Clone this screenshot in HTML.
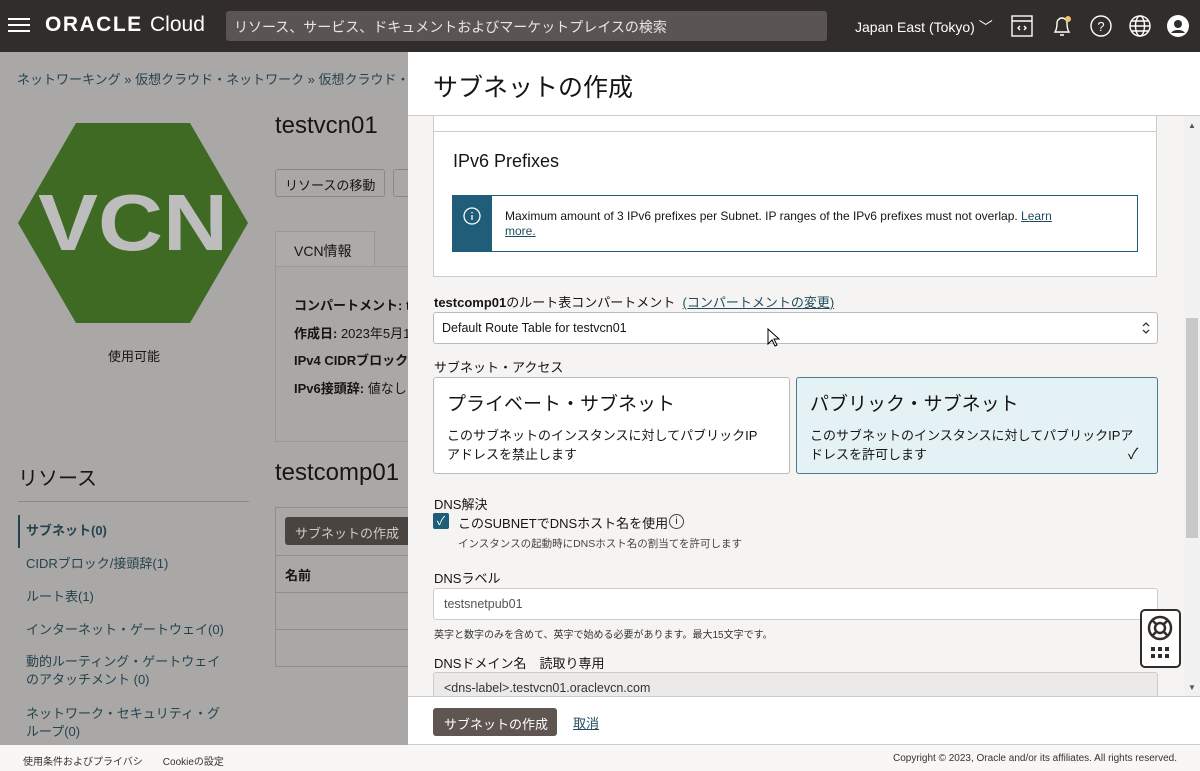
<!DOCTYPE html>
<html><head><meta charset="utf-8"><style>
*{margin:0;padding:0;box-sizing:border-box}
body{width:1200px;height:771px;overflow:hidden;position:relative;background:#a9a8a6;font-family:"Liberation Sans","Noto Sans CJK JP",sans-serif;color:#161513}
.a{position:absolute;white-space:nowrap}
.hdr{position:absolute;left:0;top:0;width:1200px;height:52px;background:#312d2a}
.lnk{color:#1d4d5e}
</style></head><body>
<div class="hdr">
 <div class="a" style="left:8px;top:18px;width:22px;height:2px;background:#fff;box-shadow:0 6px 0 #fff,0 12px 0 #fff"></div>
 <div class="a" style="left:45px;top:13px;color:#fff;font-size:21px;font-weight:bold;letter-spacing:1.5px">ORACLE <span style="font-weight:normal;letter-spacing:0">Cloud</span></div>
 <div class="a" style="left:226px;top:11px;width:601px;height:30px;background:#5a5552;border-radius:3px;color:#e8e6e4;font-size:14px;padding:6px 8px">リソース、サービス、ドキュメントおよびマーケットプレイスの検索</div>
 <div class="a" style="left:855px;top:17px;color:#fff;font-size:14px">Japan East (Tokyo) ﹀</div>
 <svg class="a" style="left:1010px;top:14px" width="24" height="24" viewBox="0 0 24 24" fill="none" stroke="#fff" stroke-width="1.4"><rect x="2" y="2" width="20" height="20"/><line x1="2" y1="7" x2="22" y2="7"/><path d="M10 12l-2 2 2 2M14 12l2 2-2 2"/></svg>
 <svg class="a" style="left:1050px;top:13px" width="24" height="26" viewBox="0 0 24 26" fill="none" stroke="#fff" stroke-width="1.4"><path d="M5 19c2-3 2-6 2-9a5 5 0 0 1 10 0c0 3 0 6 2 9z M10 22h4"/><circle cx="18" cy="6" r="3" fill="#f1c26b" stroke="none"/></svg>
 <svg class="a" style="left:1089px;top:14px" width="24" height="24" viewBox="0 0 24 24" fill="none" stroke="#fff" stroke-width="1.4"><circle cx="12" cy="12" r="10"/><text x="12" y="17" text-anchor="middle" fill="#fff" stroke="none" font-size="13" font-family="Liberation Sans">?</text></svg>
 <svg class="a" style="left:1128px;top:14px" width="24" height="24" viewBox="0 0 24 24" fill="none" stroke="#fff" stroke-width="1.4"><circle cx="12" cy="12" r="10"/><ellipse cx="12" cy="12" rx="4.5" ry="10"/><path d="M2 12h20M4 7h16M4 17h16"/></svg>
 <svg class="a" style="left:1166px;top:14px" width="24" height="24" viewBox="0 0 24 24"><circle cx="12" cy="12" r="11" fill="#fff"/><circle cx="12" cy="10" r="4" fill="#312d2a"/><path d="M5 19a8 6 0 0 1 14 0" fill="#312d2a"/></svg>
</div>
<div class="a" style="left:17px;top:69px;font-size:13px;color:#27424f">ネットワーキング » 仮想クラウド・ネットワーク » 仮想クラウド・</div>
<svg class="a" style="left:18px;top:123px" width="230" height="200" viewBox="0 0 230 200"><polygon points="58,0 172,0 230,100 172,200 58,200 0,100" fill="#3f6a24"/><text x="115" y="127" text-anchor="middle" fill="#bdbdbd" font-size="80" font-weight="bold" font-family="Liberation Sans" textLength="190" lengthAdjust="spacingAndGlyphs">VCN</text></svg>
<div class="a" style="left:108px;top:346px;font-size:13px">使用可能</div>
<div class="a" style="left:275px;top:112px;font-size:24px">testvcn01</div>
<div class="a" style="left:275px;top:169px;width:110px;height:28px;border:1px solid #888;border-radius:3px;font-size:13px;padding:5px 9px">リソースの移動</div>
<div class="a" style="left:393px;top:169px;width:20px;height:28px;border:1px solid #888;border-right:none;border-radius:3px 0 0 3px"></div>
<div class="a" style="left:275px;top:231px;width:100px;height:36px;border:1px solid #999;border-bottom:none;background:#acabaa;font-size:14px;padding:9px 18px">VCN情報</div>
<div class="a" style="left:275px;top:266px;width:133px;height:1px;background:#999"></div>
<div class="a" style="left:275px;top:266px;width:133px;height:176px;border-left:1px solid #999;border-bottom:1px solid #999"></div>
<div class="a" style="left:294px;top:292px;font-size:13px;line-height:27.5px"><b>コンパートメント:</b> t<br><b>作成日:</b> 2023年5月1<br><b>IPv4 CIDRブロック</b><br><b>IPv6接頭辞:</b> 値なし</div>
<div class="a" style="left:18px;top:462px;font-size:20px">リソース</div>
<div class="a" style="left:18px;top:501px;width:231px;height:1px;background:#8a8988"></div>
<div class="a" style="left:18px;top:515px;width:2px;height:33px;background:#27424f"></div>
<div class="a" style="left:26px;top:514px;font-size:13px;line-height:33px;color:#27424f"><b>サブネット(0)</b><br>CIDRブロック/接頭辞(1)<br>ルート表(1)<br>インターネット・ゲートウェイ(0)</div>
<div class="a" style="left:26px;top:653px;font-size:13px;line-height:18px;color:#27424f">動的ルーティング・ゲートウェイ<br>のアタッチメント (0)</div>
<div class="a" style="left:26px;top:705px;font-size:13px;line-height:18px;color:#27424f">ネットワーク・セキュリティ・グ<br>ループ(0)</div>
<div class="a" style="left:275px;top:459px;font-size:24px">testcomp01</div>
<div class="a" style="left:275px;top:507px;width:133px;height:160px;border:1px solid #8f8e8d;border-right:none"></div>
<div class="a" style="left:285px;top:517px;width:123px;height:28px;background:#4a4441;color:#ccc;font-size:13px;padding:6px 10px;border-radius:3px 0 0 3px">サブネットの作成</div>
<div class="a" style="left:275px;top:555px;width:133px;height:1px;background:#8f8e8d"></div>
<div class="a" style="left:285px;top:565px;font-size:13px;font-weight:bold">名前</div>
<div class="a" style="left:275px;top:592px;width:133px;height:1px;background:#8f8e8d"></div>
<div class="a" style="left:275px;top:629px;width:133px;height:1px;background:#8f8e8d"></div>
<div class="a" style="left:0;top:745px;width:1200px;height:26px;background:#f8f7f5"></div>
<div class="a" style="left:23px;top:753px;font-size:10px;color:#333">使用条件およびプライバシ　　Cookieの設定</div>
<div class="a" style="left:893px;top:753px;font-size:10px;color:#333">Copyright © 2023, Oracle and/or its affiliates. All rights reserved.</div>
<div class="a" style="left:408px;top:52px;width:792px;height:693px;background:#f5f4f2"></div>
<div class="a" style="left:408px;top:52px;width:792px;height:64px;background:#fff;border-bottom:1px solid #ccc"></div>
<div class="a" style="left:433px;top:68px;font-size:25px">サブネットの作成</div>
<div class="a" style="left:1184px;top:116px;width:16px;height:580px;background:#f1f1f1"></div>
<div class="a" style="left:1186px;top:318px;width:12px;height:220px;background:#c8c8c8"></div>
<div class="a" style="left:1188px;top:121px;font-size:8px;color:#555">▲</div>
<div class="a" style="left:1188px;top:683px;font-size:8px;color:#555">▼</div>
<div class="a" style="left:433px;top:116px;width:724px;height:161px;background:#fff;border:1px solid #ccc;border-top:none"></div>
<div class="a" style="left:433px;top:131px;width:724px;height:1px;background:#ccc"></div>
<div class="a" style="left:453px;top:151px;font-size:18px">IPv6 Prefixes</div>
<div class="a" style="left:452px;top:195px;width:686px;height:57px;border:1px solid #1f5d78;background:#fff"></div>
<div class="a" style="left:452px;top:195px;width:40px;height:57px;background:#1f5d78"></div>
<svg class="a" style="left:463px;top:207px" width="18" height="18" viewBox="0 0 18 18" fill="none" stroke="#fff" stroke-width="1.3"><circle cx="9" cy="9" r="8"/><path d="M9 8v5M9 5v1.2"/></svg>
<div class="a" style="left:505px;top:209px;font-size:12px;line-height:15px">Maximum amount of 3 IPv6 prefixes per Subnet. IP ranges of the IPv6 prefixes must not overlap. <span class="lnk" style="text-decoration:underline">Learn</span><br><span class="lnk" style="text-decoration:underline">more.</span></div>
<div class="a" style="left:434px;top:292px;font-size:13px"><b>testcomp01</b>のルート表コンパートメント &nbsp;<span class="lnk" style="text-decoration:underline">(コンパートメントの変更)</span></div>
<div class="a" style="left:433px;top:312px;width:725px;height:32px;background:#fff;border:1px solid #bbb;border-radius:3px;font-size:12.5px;padding:8px 8px">Default Route Table for testvcn01</div>
<svg class="a" style="left:1141px;top:321px" width="10" height="14" viewBox="0 0 10 14" fill="none" stroke="#333" stroke-width="1.3"><path d="M2 5l3-3 3 3M2 9l3 3 3-3"/></svg>
<div class="a" style="left:434px;top:357px;font-size:13px">サブネット・アクセス</div>
<div class="a" style="left:433px;top:377px;width:357px;height:97px;background:#fff;border:1px solid #bbb;border-radius:3px"></div>
<div class="a" style="left:447px;top:389px;font-size:19px">プライベート・サブネット</div>
<div class="a" style="left:447px;top:426px;font-size:13px;line-height:19px">このサブネットのインスタンスに対してパブリックIP<br>アドレスを禁止します</div>
<div class="a" style="left:796px;top:377px;width:362px;height:97px;background:#e4f1f5;border:1px solid #4a7c90;border-radius:3px"></div>
<div class="a" style="left:810px;top:389px;font-size:19px">パブリック・サブネット</div>
<div class="a" style="left:810px;top:426px;font-size:13px;line-height:19px">このサブネットのインスタンスに対してパブリックIPア<br>ドレスを許可します</div>
<div class="a" style="left:1128px;top:443px;font-size:15px">✓</div>
<div class="a" style="left:434px;top:494px;font-size:13px">DNS解決</div>
<div class="a" style="left:433px;top:513px;width:16px;height:16px;background:#1f5d78;border-radius:2px;color:#fff;font-size:12px;text-align:center;line-height:16px">✓</div>
<div class="a" style="left:458px;top:513px;font-size:13px">このSUBNETでDNSホスト名を使用</div>
<div class="a" style="left:669px;top:514px;width:15px;height:15px;border:1px solid #444;border-radius:50%;font-size:10px;text-align:center;line-height:13px">i</div>
<div class="a" style="left:458px;top:536px;font-size:10.5px;color:#444">インスタンスの起動時にDNSホスト名の割当てを許可します</div>
<div class="a" style="left:434px;top:568px;font-size:13px">DNSラベル</div>
<div class="a" style="left:433px;top:588px;width:725px;height:32px;background:#fff;border:1px solid #ccc;border-radius:3px;font-size:12.5px;padding:8px 10px;color:#555">testsnetpub01</div>
<div class="a" style="left:434px;top:626px;font-size:10px;color:#333">英字と数字のみを含めて、英字で始める必要があります。最大15文字です。</div>
<div class="a" style="left:434px;top:653px;font-size:13px">DNSドメイン名　読取り専用</div>
<div class="a" style="left:433px;top:672px;width:725px;height:24px;background:#eceae8;border:1px solid #ccc;border-bottom:none;border-radius:3px 3px 0 0;font-size:12.5px;padding:8px 10px;color:#333">&lt;dns-label&gt;.testvcn01.oraclevcn.com</div>
<div class="a" style="left:1140px;top:609px;width:41px;height:59px;background:#fff;border:2px solid #312d2a;border-radius:5px"></div>
<svg class="a" style="left:1146px;top:614px" width="28" height="28" viewBox="0 0 28 28" fill="none" stroke="#312d2a" stroke-width="2.5"><circle cx="14" cy="14" r="11"/><circle cx="14" cy="14" r="5"/><path d="M6 6l4 4M22 6l-4 4M6 22l4-4M22 22l-4-4"/></svg>
<div class="a" style="left:1151px;top:647px;width:4px;height:4px;background:#312d2a;box-shadow:7px 0 #312d2a,14px 0 #312d2a,0 7px #312d2a,7px 7px #312d2a,14px 7px #312d2a"></div>
<div class="a" style="left:408px;top:696px;width:792px;height:49px;background:#fff;border-top:1px solid #ccc;border-bottom:1px solid #ccc"></div>
<div class="a" style="left:433px;top:708px;width:124px;height:28px;background:#5f5652;border-radius:3px;color:#fff;font-size:13px;padding:6px 11px">サブネットの作成</div>
<div class="a lnk" style="left:573px;top:713px;font-size:13px;text-decoration:underline">取消</div>
<svg class="a" style="left:767px;top:328px" width="14" height="20" viewBox="0 0 14 20"><path d="M1 1v15l4-4 3 6 2-1-3-6h5z" fill="#fff" stroke="#000"/></svg>
</body></html>
